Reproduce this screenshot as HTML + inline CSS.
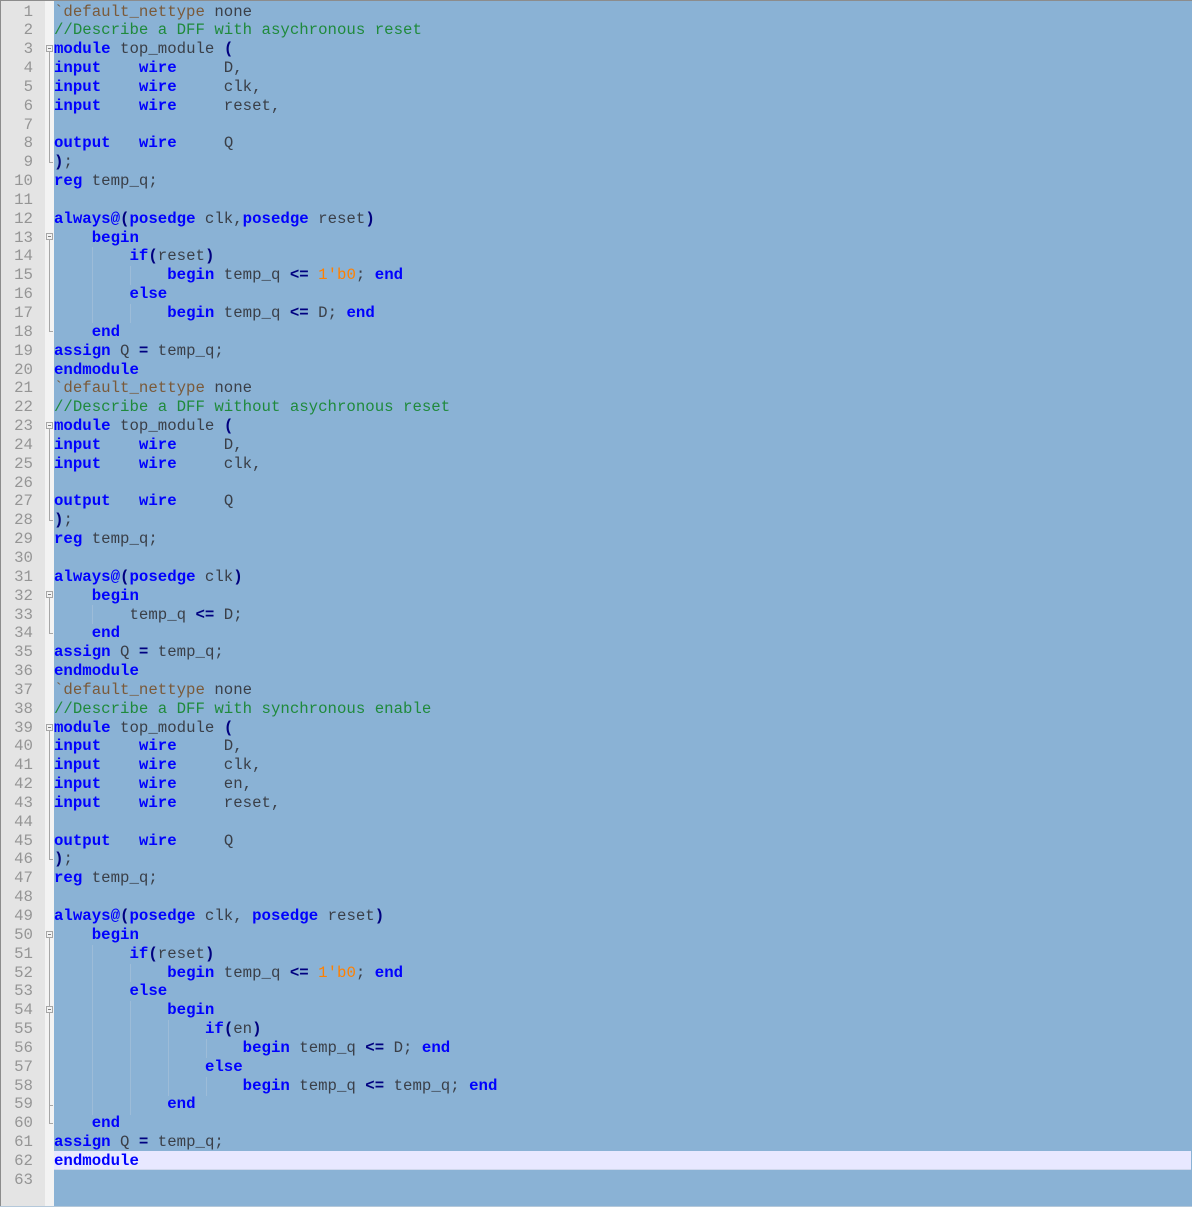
<!DOCTYPE html>
<html>
<head>
<meta charset="utf-8">
<style>
html,body{margin:0;padding:0;background:#8ab2d5}
#r{position:relative;width:1192px;height:1207px;overflow:hidden;background:#8ab2d5}
.a{position:absolute}
pre{margin:0;position:absolute;font-family:"Liberation Mono","Courier New",monospace;font-size:15.72px;line-height:18.85px;letter-spacing:0;filter:blur(0.3px)}
#n{left:0;top:2.5px;width:33px;text-align:right;color:#959595}
#c{left:54px;top:2.5px;color:#3a3f48;z-index:3}
b{color:#0000ff;font-weight:bold}
i{font-style:normal;font-weight:bold;color:#000080}
u{text-decoration:none;color:#1f8a3c}
s{text-decoration:none;color:#7a5a3a}
em{font-style:normal;color:#ff8000}
.g{position:absolute;width:1px;background:#9dbcd8}
.f{position:absolute;left:49px;width:1px;background:#a6a6a6;z-index:2}
.t{position:absolute;left:49px;width:4px;height:1px;background:#a6a6a6;z-index:2}
.x{position:absolute;left:46px;width:5px;height:5px;border:1px solid #a6a6a6;background:#f3f3f3;z-index:2}
.x:after{content:"";position:absolute;left:1px;top:2px;width:3px;height:1px;background:#808080}
</style>
</head>
<body>
<div id="r">
<div class="a" style="left:0;top:0;width:1192px;height:1px;background:#8c8c8c;z-index:5"></div>
<div class="a" style="left:0;top:0;width:1px;height:1207px;background:#8c8c8c;z-index:5"></div>
<div class="a" style="left:1px;top:1px;width:44px;height:1206px;background:#e4e4e4"></div>
<div class="a" style="left:45px;top:1px;width:9px;height:1206px;background:#f3f3f3"></div>
<div class="a" style="left:0;top:1206px;width:1192px;height:1px;background:#b4c8da;z-index:5"></div>
<div class="a" style="left:54px;top:1151px;width:1137px;height:18px;background:#e8e8ff"></div>
<div class="a" style="left:54px;top:1169px;width:1137px;height:1px;background:#cfd8ec"></div>

<div class="g" style="left:92px;top:247px;height:76px"></div>
<div class="g" style="left:130px;top:266px;height:19px"></div>
<div class="g" style="left:130px;top:304px;height:19px"></div>
<div class="g" style="left:92px;top:605px;height:19px"></div>
<div class="g" style="left:92px;top:945px;height:170px"></div>
<div class="g" style="left:130px;top:964px;height:18px"></div>
<div class="g" style="left:130px;top:1001px;height:114px"></div>
<div class="g" style="left:168px;top:1020px;height:76px"></div>
<div class="g" style="left:206px;top:1039px;height:19px"></div>
<div class="g" style="left:206px;top:1077px;height:19px"></div>

<div class="f" style="top:51px;height:112px"></div><div class="t" style="top:162px"></div><div class="x" style="top:45px"></div>
<div class="f" style="top:239px;height:93px"></div><div class="t" style="top:331px"></div><div class="x" style="top:233px"></div>
<div class="f" style="top:428px;height:93px"></div><div class="t" style="top:520px"></div><div class="x" style="top:422px"></div>
<div class="f" style="top:597px;height:37px"></div><div class="t" style="top:633px"></div><div class="x" style="top:591px"></div>
<div class="f" style="top:730px;height:130px"></div><div class="t" style="top:859px"></div><div class="x" style="top:724px"></div>
<div class="f" style="top:937px;height:187px"></div><div class="t" style="top:1123px"></div><div class="x" style="top:931px"></div>
<div class="t" style="top:1105px"></div><div class="x" style="top:1006px"></div>

<pre id="n">1
2
3
4
5
6
7
8
9
10
11
12
13
14
15
16
17
18
19
20
21
22
23
24
25
26
27
28
29
30
31
32
33
34
35
36
37
38
39
40
41
42
43
44
45
46
47
48
49
50
51
52
53
54
55
56
57
58
59
60
61
62
63</pre>

<pre id="c"><s>`default_nettype</s> none
<u>//Describe a DFF with asychronous reset</u>
<b>module</b> top_module <i>(</i>
<b>input</b>    <b>wire</b>     D,
<b>input</b>    <b>wire</b>     clk,
<b>input</b>    <b>wire</b>     reset,

<b>output</b>   <b>wire</b>     Q
<i>)</i>;
<b>reg</b> temp_q;

<b>always@</b><i>(</i><b>posedge</b> clk,<b>posedge</b> reset<i>)</i>
    <b>begin</b>
        <b>if</b><i>(</i>reset<i>)</i>
            <b>begin</b> temp_q <i>&lt;=</i> <em>1'b0</em>; <b>end</b>
        <b>else</b>
            <b>begin</b> temp_q <i>&lt;=</i> D; <b>end</b>
    <b>end</b>
<b>assign</b> Q <i>=</i> temp_q;
<b>endmodule</b>
<s>`default_nettype</s> none
<u>//Describe a DFF without asychronous reset</u>
<b>module</b> top_module <i>(</i>
<b>input</b>    <b>wire</b>     D,
<b>input</b>    <b>wire</b>     clk,

<b>output</b>   <b>wire</b>     Q
<i>)</i>;
<b>reg</b> temp_q;

<b>always@</b><i>(</i><b>posedge</b> clk<i>)</i>
    <b>begin</b>
        temp_q <i>&lt;=</i> D;
    <b>end</b>
<b>assign</b> Q <i>=</i> temp_q;
<b>endmodule</b>
<s>`default_nettype</s> none
<u>//Describe a DFF with synchronous enable</u>
<b>module</b> top_module <i>(</i>
<b>input</b>    <b>wire</b>     D,
<b>input</b>    <b>wire</b>     clk,
<b>input</b>    <b>wire</b>     en,
<b>input</b>    <b>wire</b>     reset,

<b>output</b>   <b>wire</b>     Q
<i>)</i>;
<b>reg</b> temp_q;

<b>always@</b><i>(</i><b>posedge</b> clk, <b>posedge</b> reset<i>)</i>
    <b>begin</b>
        <b>if</b><i>(</i>reset<i>)</i>
            <b>begin</b> temp_q <i>&lt;=</i> <em>1'b0</em>; <b>end</b>
        <b>else</b>
            <b>begin</b>
                <b>if</b><i>(</i>en<i>)</i>
                    <b>begin</b> temp_q <i>&lt;=</i> D; <b>end</b>
                <b>else</b>
                    <b>begin</b> temp_q <i>&lt;=</i> temp_q; <b>end</b>
            <b>end</b>
    <b>end</b>
<b>assign</b> Q <i>=</i> temp_q;
<b>endmodule</b>
</pre>
</div>
</body>
</html>
